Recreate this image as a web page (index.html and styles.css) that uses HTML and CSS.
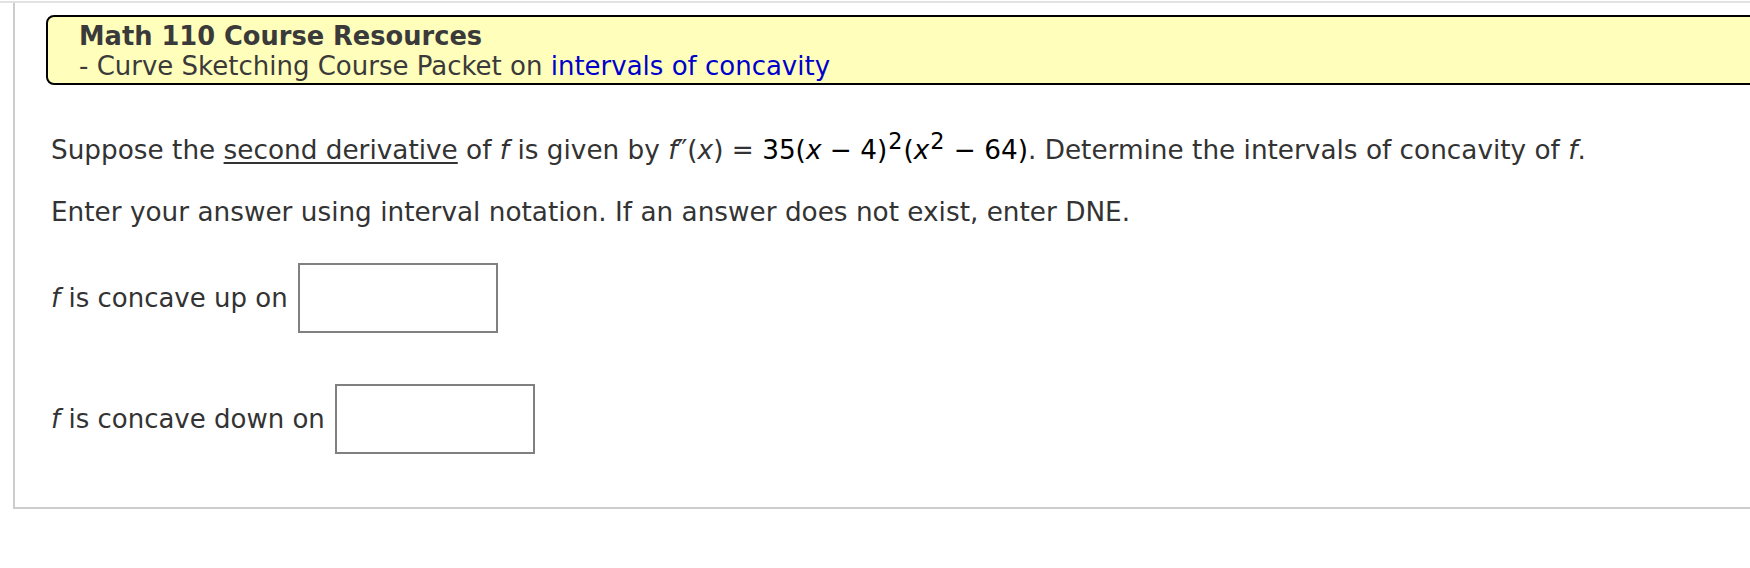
FILE: index.html
```html
<!DOCTYPE html>
<html lang="en">
<head>
<meta charset="utf-8">
<title>Math 110 - Concavity</title>
<link rel="stylesheet" href="styles.css">
</head>
<body>
<div class="topbar"></div>
<div class="panel">
  <div class="resources">
    <div class="res-title">Math 110 Course Resources</div>
    <div class="res-line">- Curve Sketching Course Packet on <a class="res-link" href="#">intervals of concavity</a></div>
  </div>
  <div class="question">
    <p class="q-text">Suppose the <span class="term">second derivative</span> of <i>f</i> is given by <i>f</i>″(<i>x</i>) = <span class="math">35(<i>x</i> − 4)<sup>2</sup>(<i>x</i><sup>2</sup> − 64)</span>. Determine the intervals of concavity of <i>f</i>.</p>
    <p class="q-text q-note">Enter your answer using interval notation. If an answer does not exist, enter DNE.</p>
    <div class="answer-row row-up">
      <label class="answer-label"><i>f</i> is concave up on</label>
      <span class="answer-box"></span>
    </div>
    <div class="answer-row row-down">
      <label class="answer-label"><i>f</i> is concave down on</label>
      <span class="answer-box"></span>
    </div>
  </div>
</div>
</body>
</html>
```

FILE: styles.css
```css
html, body {
  margin: 0;
  padding: 0;
  background: #ffffff;
}

body {
  font-family: "DejaVu Sans", Verdana, sans-serif;
  color: #333333;
  overflow: hidden;
}

.topbar {
  margin-top: 1px;
  border-top: 2px solid #e2e2e2;
}

.panel {
  margin-left: 13px;
  border-left: 2px solid #cccccc;
  border-bottom: 2px solid #cccccc;
  overflow: hidden;
  padding-top: 12px;
  padding-bottom: 53px;
}

.resources {
  margin-left: 31px;
  width: calc(100% + 60px);
  background: #ffffbb;
  border: 2px solid #000000;
  border-radius: 8px;
  padding: 4px 0 1px 31px;
  box-sizing: border-box;
}

.res-title {
  font-size: 25.7px;
  font-weight: bold;
  line-height: 30px;
  color: #3a3a3a;
}

.res-line {
  font-size: 26px;
  line-height: 31px;
  color: #3a3a3a;
}

.res-link {
  color: #0000cc;
  text-decoration: none;
}

.question {
  padding-left: 36px;
  margin-top: 50px;
}

.q-text {
  margin: 0;
  font-size: 26.3px;
  line-height: 30px;
}

.q-note {
  margin-top: 32px;
}

.term {
  text-decoration: underline;
  text-underline-offset: 3px;
}

.math {
  color: #000000;
}

sup {
  font-size: 0.85em;
  line-height: 0;
  vertical-align: 0.45em;
  margin-left: 1px;
  margin-right: 1px;
}

.answer-row {
  display: flex;
  align-items: center;
  gap: 10px;
  font-size: 26px;
  line-height: 30px;
}

.row-up {
  margin-top: 36px;
}

.row-down {
  margin-top: 51px;
}

.answer-box {
  display: block;
  width: 200px;
  height: 70px;
  box-sizing: border-box;
  border: 2px solid #808080;
  background: #ffffff;
}
```
